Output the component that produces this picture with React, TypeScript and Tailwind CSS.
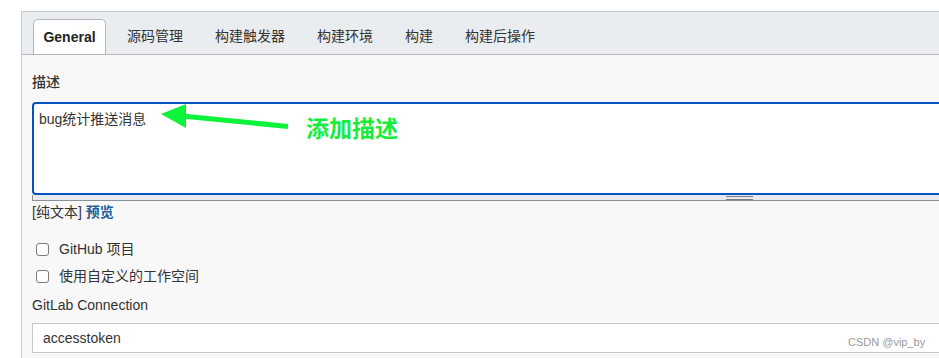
// Jenkins job config: General tab with description field
const tabs = ['源码管理', '构建触发器', '构建环境', '构建', '构建后操作']

function Checkbox({ label }: { label: string }) {
  return (
    <div className="flex h-[27px] items-center">
      <div className="ml-[4px] h-[13px] w-[13px] rounded-[3px] border border-[#7a7a7a] bg-white" />
      <span className="ml-[10px] text-[14px] text-[#333]">{label}</span>
    </div>
  )
}

export default function App() {
  return (
    <div
      className="relative h-[358px] w-[939px] overflow-hidden bg-white"
      style={{ fontFamily: '"Liberation Sans", "Noto Sans CJK SC", sans-serif' }}
    >
      <div className="ml-[21px] mt-[11px] w-[1435px] border border-[#c5c9cd] bg-[#f8f8f8]">
        {/* Tabs */}
        <div className="flex h-[43px] items-end border-b border-[#b4b8bc] bg-[#e9edf0] pl-[11px]">
          <div className="flex h-[35px] w-[73px] items-center justify-center rounded-t-[5px] border border-b-0 border-[#b4b8bc] bg-white text-[14px] font-bold text-[#222]">
            General
          </div>
          <div className="ml-[5px] flex">
            {tabs.map(t => (
              <div key={t} className="flex h-[35px] items-center px-4 text-[14px] text-[#333]">
                {t}
              </div>
            ))}
          </div>
        </div>

        {/* Form */}
        <div className="px-[10px] pb-6">
          <div className="mt-[17px] text-[14px] font-medium leading-[20px] text-[#333]">描述</div>
          <div className="mt-[10px] h-[93px] rounded-l-[4px] border-2 border-[#0451c4] bg-white px-[5px] pt-[5px] text-[14px] leading-[20px] text-[#333]">
            bug统计推送消息
          </div>
          <div className="flex h-[6px] justify-center border-b border-l border-[#8c9196] bg-[#e6eaed]">
            <div className="mt-[1px] h-[4px] w-[27px] border-y border-[#7a8085]" />
          </div>
          <div className="mt-[1px] text-[14px] leading-[20px] text-[#333]">
            [纯文本] <span className="font-semibold text-[#1d5f9a]">预览</span>
          </div>

          <div className="mt-[14px]">
            <Checkbox label="GitHub 项目" />
            <Checkbox label="使用自定义的工作空间" />
          </div>

          <div className="mt-[5px] text-[14px] font-medium leading-[20px] text-[#333]">GitLab Connection</div>
          <div className="mt-[8px] flex h-[30px] items-center border border-[#c8c8c8] bg-white px-[10px] text-[14px] text-[#333]">
            accesstoken
          </div>
        </div>
      </div>

      {/* annotation */}
      <svg className="absolute left-0 top-0" width="939" height="358" viewBox="0 0 939 358">
        <line x1="182" y1="116" x2="288" y2="126.5" stroke="#0df33c" strokeWidth="5" />
        <polygon points="161,114 186,104 186,128" fill="#0df33c" />
      </svg>
      <div className="absolute left-[306px] top-[116px] text-[23px] font-bold leading-[26px] text-[#17ec3f]">
        添加描述
      </div>

      <div className="absolute left-[848px] top-[335px] text-[11px] leading-[14px] text-[#9a9a9a]">CSDN @vip_by</div>
    </div>
  )
}
